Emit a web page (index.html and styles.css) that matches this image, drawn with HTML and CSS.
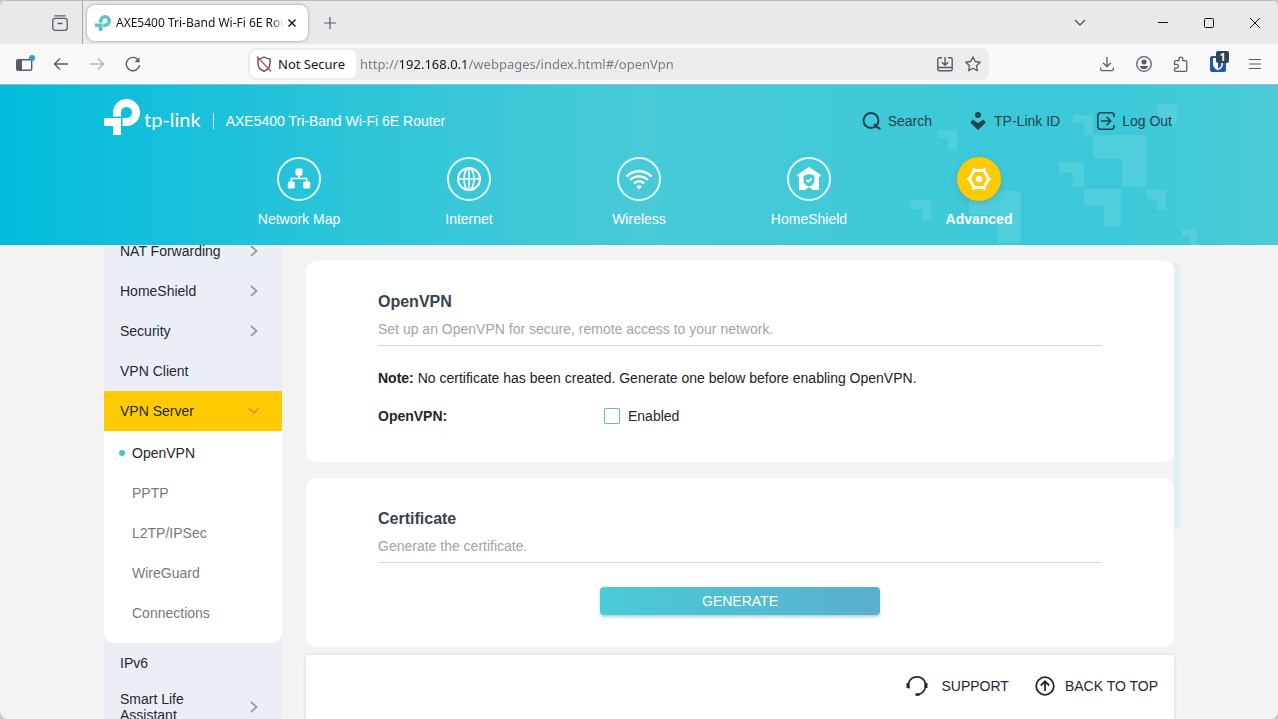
FILE: index.html
```html
<!DOCTYPE html>
<html lang="en">
<head>
<meta charset="utf-8">
<title>AXE5400 Tri-Band Wi-Fi 6E Router</title>
<link rel="stylesheet" href="styles.css">
</head>
<body>
<svg class="defs" aria-hidden="true">
  <symbol id="tp-mark" viewBox="0 0 36 36">
    <path d="M0 19h17v17H9v-9H0z" fill="currentColor"/>
    <path d="M13 17.500V13.500A9.500 9.500 0 1 1 22.500 23H18.500" fill="none" stroke="currentColor" stroke-width="8"/>
  </symbol>
  <symbol id="chev-right" viewBox="0 0 8 12"><path d="M1 1l5.500 5L1 11" fill="none" stroke="currentColor" stroke-width="1.800"/></symbol>
  <symbol id="chev-down" viewBox="0 0 12 8"><path d="M1 1l5 5 5-5" fill="none" stroke="currentColor" stroke-width="1.500"/></symbol>
</svg>

<div class="browser">
  <div class="tabbar">
    <button class="chrome-btn view-btn" aria-label="Recent browsing">
      <svg width="16" height="16" viewBox="0 0 16 16" fill="none" stroke="currentColor" stroke-width="1.300"><path d="M2.500.8h11"/><rect x=".8" y="3.300" width="14.400" height="12" rx="2.200"/><path d="M5.500 8.500h5"/></svg>
    </button>
    <div class="tab">
      <svg class="favicon" width="16" height="16"><use href="#tp-mark"/></svg>
      <span class="tab-title">AXE5400 Tri-Band Wi-Fi 6E Router</span>
      <button class="tab-close" aria-label="Close tab"><svg width="8" height="8" viewBox="0 0 8 8" stroke="currentColor" stroke-width="1.400"><path d="M.5.5l7 7M7.500.5l-7 7"/></svg></button>
    </div>
    <button class="chrome-btn" aria-label="New tab"><svg width="12" height="12" viewBox="0 0 12 12" stroke="currentColor" stroke-width="1.200"><path d="M6 0v12M0 6h12"/></svg></button>
    <button class="chrome-btn tabs-list" aria-label="List all tabs"><svg width="12" height="8"><use href="#chev-down"/></svg></button>
    <div class="window-controls">
      <button class="window-btn" aria-label="Minimize"><svg width="10" height="10" viewBox="0 0 10 10" stroke="currentColor"><path d="M0 4.500h10"/></svg></button>
      <button class="window-btn" aria-label="Maximize"><svg width="10" height="10" viewBox="0 0 10 10" fill="none" stroke="currentColor"><rect x=".5" y=".5" width="9" height="9" rx="1"/></svg></button>
      <button class="window-btn" aria-label="Close"><svg width="10" height="10" viewBox="0 0 10 10" stroke="currentColor"><path d="M0 0l10 10M10 0L0 10"/></svg></button>
    </div>
  </div>

  <div class="toolbar">
    <div class="tool-group left">
      <button class="chrome-btn" aria-label="Sidebar"><svg width="20" height="18" viewBox="0 0 20 18" fill="none"><rect x="1.700" y="4.700" width="15" height="10.600" rx="1.500" stroke="currentColor" stroke-width="1.400"/><path d="M2 5h5v10H2z" fill="currentColor"/><circle cx="17" cy="3" r="3" fill="#2a9fd0"/></svg></button>
      <button class="chrome-btn" aria-label="Back"><svg width="16" height="16" viewBox="0 0 16 16" fill="none" stroke="currentColor" stroke-width="1.400"><path d="M15 8H1.500M7 2.500L1.500 8 7 13.500"/></svg></button>
      <button class="chrome-btn" aria-label="Forward" disabled><svg width="16" height="16" viewBox="0 0 16 16" fill="none" stroke="currentColor" stroke-width="1.400"><path d="M1 8h13.500M9 2.500L14.500 8 9 13.500"/></svg></button>
      <button class="chrome-btn" aria-label="Reload"><svg width="16" height="16" viewBox="0 0 16 16" fill="none" stroke="currentColor" stroke-width="1.400"><path d="M14.600 9.200A6.700 6.700 0 1 1 12.800 3.400"/><path d="M14.500 1.200v5h-5z" fill="currentColor" stroke="none"/></svg></button>
    </div>
    <div class="urlbar">
      <button class="identity">
        <svg width="16" height="18" viewBox="0 0 16 18" fill="none"><path d="M8 2C6 3.400 4 3.700 2 3.900V8c0 4 2.400 7 6 8.200 3.600-1.200 6-4.200 6-8.200V3.900C12 3.700 10 3.400 8 2z" stroke="#5b5b66" stroke-width="1.500"/><path d="M1 1.500l14 15" stroke="#d9415f" stroke-width="1.300"/></svg>
        Not Secure
      </button>
      <input class="url" type="text" aria-label="Address" value="http://192.168.0.1/webpages/index.html#/openVpn">
      <button class="chrome-btn url-btn" aria-label="Install page"><svg width="16" height="16" viewBox="0 0 16 16" fill="none" stroke="currentColor" stroke-width="1.400"><path d="M5 1.700H2.300A1.500 1.500 0 0 0 .8 3.200v10a1.500 1.500 0 0 0 1.500 1.500h11.400a1.500 1.500 0 0 0 1.500-1.500v-10a1.500 1.500 0 0 0-1.500-1.500H11M1 11.500h14M8 1v8M5 6.200l3 3 3-3"/></svg></button>
      <button class="chrome-btn url-btn" aria-label="Bookmark"><svg width="16" height="16" viewBox="0 0 16 16" fill="none" stroke="currentColor" stroke-width="1.300" stroke-linejoin="round"><path d="M8 .9l2.200 4.600 5 .7-3.700 3.500.9 5L8 12.300l-4.400 2.400.9-5L.8 6.200l5-.7z"/></svg></button>
    </div>
    <div class="tool-group">
      <button class="chrome-btn" aria-label="Downloads"><svg width="14" height="16" viewBox="0 0 14 16" fill="none" stroke="currentColor" stroke-width="1.300"><path d="M7 1v9.500M3 6.700l4 4 4-4M.7 11.500v1.700c0 .9.600 1.500 1.500 1.500h9.600c.9 0 1.500-.6 1.500-1.500v-1.700"/></svg></button>
      <button class="chrome-btn" aria-label="Account"><svg width="16" height="16" viewBox="0 0 16 16" fill="none"><circle cx="8" cy="8" r="7.300" stroke="currentColor" stroke-width="1.300"/><circle cx="8" cy="6" r="2.500" fill="currentColor"/><path d="M3.500 10h9c-.6 2-2.400 3.200-4.500 3.200S4.100 12 3.500 10z" fill="currentColor"/></svg></button>
      <button class="chrome-btn" aria-label="Extensions"><svg width="16" height="16" viewBox="0 0 16 16" fill="none" stroke="currentColor" stroke-width="1.300" stroke-linejoin="round"><path d="M1.500 6a1.300 1.300 0 0 1 1.300-1.300H6V3a1.900 1.900 0 0 1 3.800 0v1.700h2.700a1.300 1.300 0 0 1 1.300 1.300v8a1.300 1.300 0 0 1-1.300 1.300H2.800A1.300 1.300 0 0 1 1.500 14v-1.800h2a1.900 1.900 0 0 0 0-3.900h-2z"/></svg></button>
      <button class="chrome-btn" aria-label="Bitwarden">
        <svg width="16" height="16" viewBox="0 0 16 16"><rect width="16" height="16" rx="2" fill="#2456b4"/><path d="M3 2h10v6c0 3-2 5-5 6.300C5 13 3 11 3 8z" fill="#fff"/><path d="M8 3.500h3.500V8c0 2-1.300 3.500-3.500 4.700z" fill="#2456b4"/></svg>
        <span class="count">1</span>
      </button>
      <button class="chrome-btn" aria-label="Menu"><svg width="12" height="12" viewBox="0 0 12 12" stroke="currentColor" stroke-width="1.200"><path d="M0 1.500h12M0 6h12M0 10.500h12"/></svg></button>
    </div>
  </div>

  <header class="app-header">
    <svg class="pattern" width="438" height="160" viewBox="0 0 438 160" fill="#fff" fill-opacity=".1" aria-hidden="true">
      <path d="M97 45h20v20h-9V53H97zM71 115h20v20h-9v-11H71zM233 30h20v20h-9V38h-11zM317 19h20v20h-20zM253 50h53v52h-24V74h-23a6 6 0 0 1-6-6zM219 77h25v25h-11V88h-14zM244 104h37v37h-17v-20h-20zM306 105h20v20h-9v-11h-11zM342 144h15v16h-7v-9h-8zM129 106h52v52h-24v-28h-28z"/>
    </svg>
    <div class="app-top">
      <div class="brand">
        <svg class="brand-mark" width="36" height="36"><use href="#tp-mark"/></svg>
        <span class="wordmark">tp-link</span>
        <span class="model">AXE5400 Tri-Band Wi-Fi 6E Router</span>
      </div>
      <div class="account">
        <button class="account-btn"><svg width="19" height="18" viewBox="0 0 19 18" fill="none" stroke="currentColor" stroke-width="2"><circle cx="9" cy="8.500" r="7.500"/><path d="M12 12l2.500 3 4 2"/></svg>Search</button>
        <button class="account-btn"><svg width="18" height="18" viewBox="0 0 18 18" fill="currentColor"><circle cx="9" cy="3" r="3"/><path d="M3.700 7.500L9 11.300l5.300-3.800 2.500 3L9 18l-7.800-7.500z"/></svg>TP-Link ID</button>
        <button class="account-btn"><svg width="18" height="18" viewBox="0 0 18 18" fill="none" stroke="currentColor" stroke-width="1.600"><path d="M17 5V3.500A2.700 2.700 0 0 0 14.300.8H3.500A2.700 2.700 0 0 0 .8 3.500v11a2.700 2.700 0 0 0 2.700 2.700h10.800a2.700 2.700 0 0 0 2.700-2.700V13M4 9h9.500M9.500 4.800L13.700 9l-4.200 4.200"/></svg>Log Out</button>
      </div>
    </div>
    <nav class="app-nav">
      <a class="nav-item" href="#networkMap"><span class="nav-icon"><svg width="24" height="24" viewBox="0 0 24 24" fill="currentColor"><rect x="8.500" y="1.500" width="7" height="7" rx="1.500"/><rect x=".8" y="14.500" width="7" height="7" rx="1.500"/><rect x="16.200" y="14.500" width="7" height="7" rx="1.500"/><path d="M12 8v3.500M4.300 15v-3.500h15.400V15" fill="none" stroke="currentColor" stroke-width="1.600"/></svg></span>Network Map</a>
      <a class="nav-item" href="#internet"><span class="nav-icon"><svg width="24" height="24" viewBox="0 0 24 24" fill="none" stroke="currentColor" stroke-width="2"><circle cx="12" cy="12" r="11"/><ellipse cx="12" cy="12" rx="5" ry="11" stroke-width="1.700"/><path d="M12 1v22M1 12h22" stroke-width="1.500"/></svg></span>Internet</a>
      <a class="nav-item" href="#wireless"><span class="nav-icon"><svg width="28" height="24" viewBox="0 0 28 24" fill="none" stroke="currentColor" stroke-width="2.400"><path d="M1.500 9.500a17.500 17.500 0 0 1 25 0M5.200 13a12.500 12.500 0 0 1 17.600 0M9 16.400a7.200 7.200 0 0 1 10 0"/><path d="M11.200 19.500L14 22.500l2.800-3a4 4 0 0 0-5.600 0z" fill="currentColor" stroke="none"/></svg></span>Wireless</a>
      <a class="nav-item" href="#homeShield"><span class="nav-icon"><svg width="24" height="24" viewBox="0 0 24 24" fill="currentColor"><path fill-rule="evenodd" d="M12 0l12 8-1.300 2H22v13h-6.500c-.6-1-1.700-1.700-3.500-2.700-1.800 1-2.900 1.700-3.500 2.700H2V10h-.7L0 8zM12 7l-5.500 1.800v4.700c0 2.700 2 4.700 5.500 6 3.500-1.300 5.500-3.300 5.500-6V8.800z"/><path d="M9.300 12.800l2 2 3.400-3.400" fill="none" stroke="currentColor" stroke-width="1.800"/></svg></span>HomeShield</a>
      <a class="nav-item active" href="#advanced" aria-current="page"><span class="nav-icon"><svg width="24" height="24" viewBox="0 0 24 24" fill="none" stroke="currentColor"><path d="M7 3.500h10l4.500 8.500-4.500 8.500H7L2.500 12z" stroke-width="2.800" stroke-linejoin="round"/><path d="M6.500 1v4M17.500 1v4M6.500 19v4M17.500 19v4M0 12h3M21 12h3" stroke-width="2.200"/><circle cx="12" cy="12" r="3.200" fill="currentColor" stroke="none"/></svg></span>Advanced</a>
    </nav>
  </header>

  <div class="page">
    <aside class="sidebar">
      <nav class="menu">
        <a class="menu-item" href="#nat">NAT Forwarding<svg width="8" height="12"><use href="#chev-right"/></svg></a>
        <a class="menu-item" href="#homeshield">HomeShield<svg width="8" height="12"><use href="#chev-right"/></svg></a>
        <a class="menu-item" href="#security">Security<svg width="8" height="12"><use href="#chev-right"/></svg></a>
        <a class="menu-item" href="#vpnClient">VPN Client</a>
        <a class="menu-item open" href="#vpnServer">VPN Server<svg width="12" height="8"><use href="#chev-down"/></svg></a>
        <div class="submenu">
          <a class="sub-item current" href="#openVpn">OpenVPN</a>
          <a class="sub-item" href="#pptp">PPTP</a>
          <a class="sub-item" href="#l2tp">L2TP/IPSec</a>
          <a class="sub-item" href="#wireguard">WireGuard</a>
          <a class="sub-item" href="#connections">Connections</a>
        </div>
        <a class="menu-item" href="#ipv6">IPv6</a>
        <a class="menu-item tall" href="#smartLife"><span class="two-line">Smart Life Assistant</span><svg width="8" height="12"><use href="#chev-right"/></svg></a>
      </nav>
    </aside>

    <main class="content">
      <section class="card">
        <h2 class="card-title">OpenVPN</h2>
        <p class="card-desc">Set up an OpenVPN for secure, remote access to your network.</p>
        <p class="note"><b>Note:</b> No certificate has been created. Generate one below before enabling OpenVPN.</p>
        <div class="field">
          <span class="field-label">OpenVPN:</span>
          <label class="check"><input class="box" type="checkbox">Enabled</label>
        </div>
      </section>
      <section class="card">
        <h2 class="card-title">Certificate</h2>
        <p class="card-desc">Generate the certificate.</p>
        <button class="generate">GENERATE</button>
      </section>
      <footer class="footer">
        <a class="footer-link" href="#support"><svg width="22" height="20" viewBox="0 0 22 20" fill="none" stroke="currentColor" stroke-width="1.700"><path d="M3 12.500C1 6 5 .9 11 .9S21 6 19 12.500c-1.200 3.500-3.500 5.500-7 6"/><path d="M2 7v5M20 7v5" stroke-width="3"/><path d="M9.500 18.500h4" stroke-width="2.600"/></svg>SUPPORT</a>
        <a class="footer-link top" href="#top"><svg width="20" height="20" viewBox="0 0 20 20" fill="none" stroke="currentColor" stroke-width="1.800"><circle cx="10" cy="10" r="8.800"/><path d="M10 15V5.500M5.800 9.500L10 5.300l4.200 4.200"/></svg>BACK TO TOP</a>
      </footer>
      <div class="scrollbar"></div>
    </main>
  </div>
</div>
</body>
</html>
```

FILE: styles.css
```css
* { box-sizing: border-box; }

body {
  margin: 0;
  background: #c9c9cc;
  font: 14px/16px "Liberation Sans", Arial, sans-serif;
  color: #22292d;
}

a { color: inherit; text-decoration: none; }
svg { display: block; flex: none; }
button, input { font: inherit; color: inherit; }
button { margin: 0; padding: 0; border: 0; background: none; }
h2, p { margin: 0; }

.defs { position: absolute; width: 0; height: 0; }

.browser {
  display: flex;
  flex-direction: column;
  height: 100vh;
  overflow: hidden;
  border-radius: 8px;
  background: #f3f3f3;
}

/* Browser chrome */
.tabbar, .toolbar {
  display: flex;
  align-items: center;
  flex: none;
  font-family: "Noto Sans", "Open Sans", sans-serif;
  color: #5b5b66;
}

.tabbar {
  height: 44px;
  border-top: 1px solid #b9b8bc;
  background: #e9e9ec;
}

.chrome-btn {
  position: relative;
  display: flex;
  align-items: center;
  justify-content: center;
  width: 37px;
  height: 32px;
}
.chrome-btn:disabled { color: #b7b7bd; }

.view-btn {
  width: 83px;
  height: 43px;
  padding-left: 38px;
  border-right: 1px solid #a9a9b0;
}

.tab {
  display: flex;
  align-items: center;
  width: 221px;
  height: 36px;
  margin: 0 3px 0 4px;
  padding: 0 8px;
  border-radius: 8px;
  background: #fff;
  box-shadow: 0 0 3px rgba(0, 0, 0, .4);
}
.favicon { margin-right: 5px; color: #5bc4c6; }
.tab-title {
  flex: 1;
  overflow: hidden;
  white-space: nowrap;
  font-size: 12px;
  color: #15141a;
  mask-image: linear-gradient(to left, transparent, #000 12px);
}
.tab-close { padding: 4px; color: #15141a; }

.tabs-list { margin-left: auto; }
.window-controls { display: flex; margin-left: 42px; }
.window-btn {
  display: flex;
  align-items: center;
  justify-content: center;
  width: 46px;
  height: 40px;
  color: #15141a;
}

.toolbar {
  height: 41px;
  padding: 0 5px 0 7px;
  border-bottom: 1px solid #8fc3cb;
  background: #f9f9fb;
}
.tool-group { display: flex; }
.tool-group.left .chrome-btn { width: 36px; }

.urlbar {
  display: flex;
  align-items: center;
  flex: 1;
  height: 32px;
  margin: 0 99px 0 97px;
  padding: 2px;
  border-radius: 8px;
  background: #ececef;
}
.identity {
  display: flex;
  align-items: center;
  gap: 6px;
  height: 28px;
  padding: 0 11px 0 6px;
  border-radius: 6px;
  background: #fff;
  font-size: 13px;
  color: #15141a;
}
.url {
  flex: 1;
  min-width: 0;
  padding: 0 4px;
  border: 0;
  outline: 0;
  font-size: 13px;
  background: linear-gradient(to right, #777780 43px, #15141a 43px, #15141a 112px, #777780 112px);
  background-clip: text;
  color: transparent;
}
.chrome-btn.url-btn { width: 28px; }

.count {
  position: absolute;
  top: 3px;
  right: 7px;
  width: 13px;
  border-radius: 2px;
  background: #2f4652;
  color: #fff;
  font: bold 10px/12px "Noto Sans", sans-serif;
  text-align: center;
}

/* Router header */
.app-header {
  position: relative;
  flex: none;
  height: 160px;
  padding: 14px 24px 0;
  background: linear-gradient(to right, #02bcdc, #34c6d9 33%, #48cad7 50%, #3bc9d9 80%, #3bc9d9 88%, #4bcbd5);
}
.pattern { position: absolute; top: 0; right: 0; }

.app-top {
  position: relative;
  display: flex;
  align-items: center;
  justify-content: space-between;
  max-width: 1070px;
  height: 44px;
  margin: 0 auto;
}
.brand { display: flex; align-items: center; height: 44px; color: #fff; }
.brand-mark, .wordmark { align-self: flex-start; }
.wordmark {
  margin-left: 4px;
  padding-right: 12px;
  font: 20px/40px Lato, sans-serif;
}
.model {
  padding-left: 12px;
  border-left: 1px solid #d5f3f6;
}
.account { display: flex; gap: 37px; padding-right: 2px; color: #22444d; }
.account-btn { display: flex; align-items: center; gap: 7px; }

.app-nav {
  position: relative;
  display: grid;
  grid-template-columns: repeat(5, 1fr);
  max-width: 850px;
  margin: 14px auto 0;
}
.nav-item {
  display: flex;
  flex-direction: column;
  align-items: center;
  gap: 10px;
  color: #fff;
}
.nav-icon {
  display: flex;
  align-items: center;
  justify-content: center;
  width: 44px;
  height: 44px;
  border: 2px solid #e6fafb;
  border-radius: 50%;
}
.nav-item.active { font-weight: bold; }
.nav-item.active .nav-icon {
  border-color: #ffca00;
  background: #ffca00;
  box-shadow: 0 2px 6px rgba(90, 130, 90, .4);
}

/* Page */
.page {
  display: flex;
  flex: 1;
  gap: 24px;
  width: 100%;
  max-width: 1070px;
  min-height: 0;
  margin: 0 auto;
}
.sidebar {
  flex: none;
  width: 178px;
  overflow: hidden;
  background: #ebeff5;
}
.menu { margin-top: -14px; }
.menu-item {
  display: flex;
  align-items: center;
  justify-content: space-between;
  height: 40px;
  padding: 0 24px 0 16px;
}
.menu-item svg { color: #9b9fa4; }
.menu-item.open { padding-right: 22px; background: #ffca00; }
.menu-item.open svg { color: #b5a04a; }
.menu-item.tall { height: 48px; }
.two-line { width: 80px; }

.submenu {
  padding: 2px 0 10px;
  border-radius: 0 0 10px 10px;
  background: #fff;
}
.sub-item {
  display: flex;
  align-items: center;
  height: 40px;
  padding-left: 28px;
  color: #747a7d;
}
.sub-item.current { padding-left: 15px; color: #22292d; }
.sub-item.current::before {
  content: "";
  width: 6px;
  height: 6px;
  margin-right: 7px;
  border-radius: 50%;
  background: #4ac1cc;
}

.content {
  position: relative;
  display: flex;
  flex-direction: column;
  flex: 1;
  min-width: 0;
  padding-top: 16px;
}
.card {
  flex: none;
  margin-bottom: 16px;
  padding: 32px 72px;
  border-radius: 10px;
  background: #fff;
}
.card-title { font-size: 16px; line-height: 18px; color: #36444b; }
.card-desc {
  margin: 10px 0 24px;
  padding-bottom: 8px;
  border-bottom: 1px solid #d5d9dc;
  color: #a0a5a8;
}
.note { margin-bottom: 22px; color: #1c2124; }
.field { display: flex; align-items: center; padding-bottom: 6px; }
.field-label { width: 226px; font-weight: bold; }
.check { display: flex; align-items: center; gap: 8px; }
.box {
  appearance: none;
  width: 16px;
  height: 16px;
  margin: 0;
  border: 1px solid #63b5c9;
  border-radius: 2px;
  background: #fff;
}
.generate {
  display: block;
  width: 280px;
  height: 28px;
  margin: 0 auto;
  border-radius: 4px;
  background: linear-gradient(to right, #4acbd6, #5aafce);
  box-shadow: 0 2px 3px rgba(74, 160, 190, .45);
  color: #fff;
}

.footer {
  display: flex;
  align-items: flex-start;
  justify-content: flex-end;
  gap: 26px;
  flex: 1;
  margin-top: -8px;
  padding: 21px 16px;
  background: #fff;
  box-shadow: 0 0 3px rgba(0, 0, 0, .15);
}
.footer-link { display: flex; align-items: center; gap: 13px; }
.footer-link.top { gap: 10px; }

.scrollbar {
  position: absolute;
  top: 18px;
  left: 100%;
  width: 6px;
  height: 266px;
  border-radius: 0 3px 3px 0;
  background: #e2eff2;
}
```
